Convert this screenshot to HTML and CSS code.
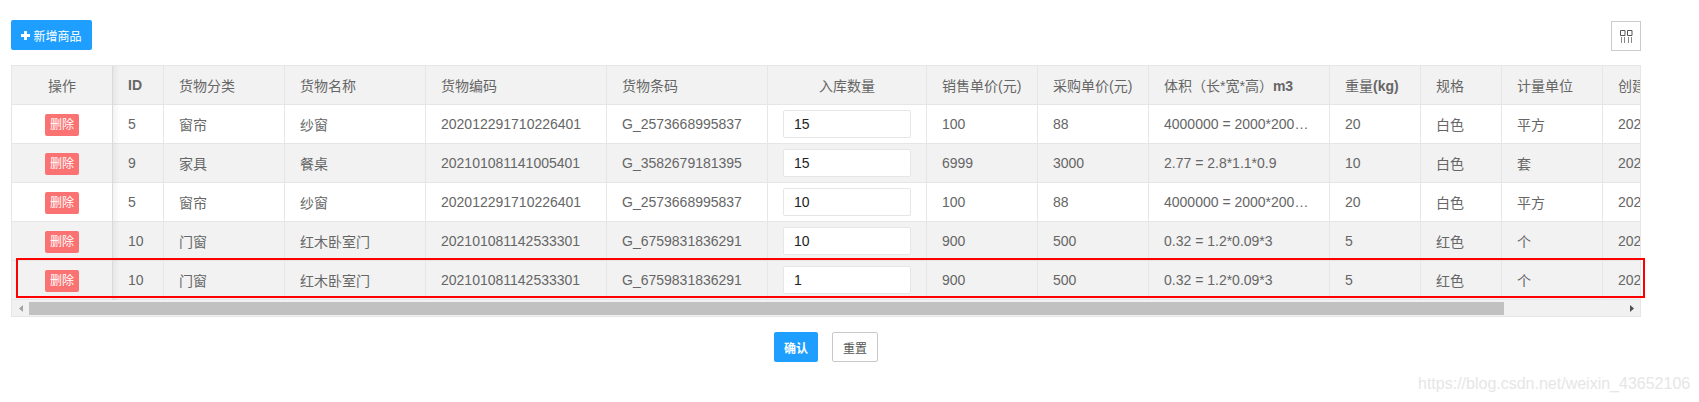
FILE: index.html
```html
<!DOCTYPE html>
<html lang="zh-CN">
<head>
<meta charset="utf-8">
<title>入库</title>
<link rel="stylesheet" href="styles.css">
</head>
<body>
<main class="page">
  <div class="toolbar">
    <button class="btn btn-add" type="button">
      <svg class="plus" viewBox="0 0 9 9" width="9" height="9"><path d="M3.1 0h2.8v3.1H9v2.8H5.9V9H3.1V5.9H0V3.1h3.1z" fill="#fff"/></svg>
      <span>新增商品</span>
    </button>
    <button class="tool-btn" type="button" aria-label="筛选列">
      <svg viewBox="0 0 14 14" width="14" height="14" fill="none" stroke="#555" stroke-width="1">
        <path d="M1.5 1.5h4.5v5H1.5zM8.5 1.5h4.5v5H8.5z"/>
        <path d="M2.5 8v6M5.5 8v6M9.5 8v6M12.5 8v6" stroke="#888"/>
      </svg>
    </button>
  </div>

  <section class="table-box">
    <div class="table-clip">
      <table class="grid">
        <colgroup>
          <col class="c-op"><col class="c-id"><col class="c-cat"><col class="c-name"><col class="c-code"><col class="c-bar"><col class="c-qty"><col class="c-sale"><col class="c-buy"><col class="c-vol"><col class="c-wt"><col class="c-spec"><col class="c-unit"><col class="c-date">
        </colgroup>
        <thead>
          <tr>
            <th class="center fixed">操作</th><th><b>ID</b></th><th>货物分类</th><th>货物名称</th><th>货物编码</th><th>货物条码</th><th class="center">入库数量</th><th>销售单价(元)</th><th>采购单价(元)</th><th>体积（长*宽*高）<b>m3</b></th><th>重量<b>(kg)</b></th><th>规格</th><th>计量单位</th><th>创建时间</th>
          </tr>
        </thead>
        <tbody>
          <tr>
            <td class="center fixed"><button class="del" type="button">删除</button></td><td>5</td><td>窗帘</td><td>纱窗</td><td>202012291710226401</td><td>G_2573668995837</td><td><input class="qty" type="text" value="15"></td><td>100</td><td>88</td><td>4000000 = 2000*2000*1</td><td>20</td><td>白色</td><td>平方</td><td>2020-12-29</td>
          </tr>
          <tr class="alt">
            <td class="center fixed"><button class="del" type="button">删除</button></td><td>9</td><td>家具</td><td>餐桌</td><td>202101081141005401</td><td>G_3582679181395</td><td><input class="qty" type="text" value="15"></td><td>6999</td><td>3000</td><td>2.77 = 2.8*1.1*0.9</td><td>10</td><td>白色</td><td>套</td><td>2021-01-08</td>
          </tr>
          <tr>
            <td class="center fixed"><button class="del" type="button">删除</button></td><td>5</td><td>窗帘</td><td>纱窗</td><td>202012291710226401</td><td>G_2573668995837</td><td><input class="qty" type="text" value="10"></td><td>100</td><td>88</td><td>4000000 = 2000*2000*1</td><td>20</td><td>白色</td><td>平方</td><td>2020-12-29</td>
          </tr>
          <tr class="alt">
            <td class="center fixed"><button class="del" type="button">删除</button></td><td>10</td><td>门窗</td><td>红木卧室门</td><td>202101081142533301</td><td>G_6759831836291</td><td><input class="qty" type="text" value="10"></td><td>900</td><td>500</td><td>0.32 = 1.2*0.09*3</td><td>5</td><td>红色</td><td>个</td><td>2021-01-08</td>
          </tr>
          <tr class="alt">
            <td class="center fixed"><button class="del" type="button">删除</button></td><td>10</td><td>门窗</td><td>红木卧室门</td><td>202101081142533301</td><td>G_6759831836291</td><td><input class="qty" type="text" value="1"></td><td>900</td><td>500</td><td>0.32 = 1.2*0.09*3</td><td>5</td><td>红色</td><td>个</td><td>2021-01-08</td>
          </tr>
        </tbody>
      </table>
    </div>
    <div class="scrollbar">
      <span class="arrow"><svg viewBox="0 0 4 7" width="4" height="7"><path d="M4 0v7L0 3.5z" fill="#a3a3a3"/></svg></span>
      <span class="track"><span class="thumb"></span></span>
      <span class="arrow"><svg viewBox="0 0 4 7" width="4" height="7"><path d="M0 0v7l4-3.5z" fill="#505050"/></svg></span>
    </div>
  </section>

  <div class="actions">
    <button class="btn btn-ok" type="button">确认</button>
    <button class="btn btn-reset" type="button">重置</button>
  </div>
</main>
<div class="mark-box"></div>
<div class="watermark">https://blog.csdn.net/weixin_43652106</div>
</body>
</html>
```
FILE: styles.css
```css
* { box-sizing: border-box; }
html, body { margin: 0; padding: 0; background: #fff; }
body {
  position: relative;
  width: 1699px;
  height: 402px;
  overflow: hidden;
  font-family: "Liberation Sans", "Noto Sans CJK SC", sans-serif;
  font-size: 14px;
  color: #666;
}
.page { width: 1630px; margin-left: 11px; padding-top: 20px; }

.toolbar { display: flex; justify-content: space-between; align-items: flex-start; height: 45px; }
.btn {
  display: inline-flex;
  align-items: center;
  justify-content: center;
  height: 30px;
  border: 0;
  border-radius: 2px;
  padding: 0;
  font: inherit;
  font-size: 12px;
  cursor: pointer;
}
.btn-add { width: 81px; gap: 3px; background: #1e9fff; color: #fff; }
.plus { display: block; }
.tool-btn {
  display: flex;
  align-items: center;
  justify-content: center;
  width: 30px;
  height: 30px;
  margin-top: 1px;
  padding: 0;
  border: 1px solid #ccc;
  background: #fff;
}

.table-box { border: 1px solid #e6e6e6; height: 252px; background: #f1f1f1; }
.table-clip { overflow: hidden; height: 234px; }
.grid { table-layout: fixed; width: 1759px; border-collapse: separate; border-spacing: 0; background: #fff; }
.c-op { width: 101px; } .c-id { width: 51px; } .c-cat { width: 121px; } .c-name { width: 141px; }
.c-code { width: 181px; } .c-bar { width: 161px; } .c-qty { width: 159px; } .c-sale { width: 111px; }
.c-buy { width: 111px; } .c-vol { width: 181px; } .c-wt { width: 91px; } .c-spec { width: 81px; }
.c-unit { width: 101px; } .c-date { width: 173px; }

th, td {
  height: 39px;
  padding: 0 15px;
  border-right: 1px solid #e6e6e6;
  border-bottom: 1px solid #e6e6e6;
  font-weight: 400;
  text-align: left;
  white-space: nowrap;
  overflow: hidden;
  text-overflow: ellipsis;
  color: #666;
}
th { background: #f2f2f2; }
th b { font-weight: 700; }
tr.alt td { background: #f2f2f2; }
.center { text-align: center; }
.fixed { position: relative; overflow: visible; z-index: 1; padding: 0; }
.fixed::after {
  content: "";
  position: absolute;
  top: 0;
  bottom: -1px;
  left: 100%;
  width: 8px;
  background: linear-gradient(to right, rgba(0, 0, 0, .055), rgba(0, 0, 0, 0));
}

.del {
  display: block;
  width: 34px;
  height: 22px;
  margin: 1px auto 0;
  padding: 0;
  border: 0;
  border-radius: 2px;
  background: #fa7272;
  color: #fff;
  font: inherit;
  font-size: 12px;
  line-height: 22px;
}
.qty {
  display: block;
  width: 128px;
  height: 28px;
  padding: 0 0 0 10px;
  border: 1px solid #e6e6e6;
  border-radius: 2px;
  background: #fff;
  color: #222;
  font: inherit;
  font-size: 14px;
  outline: 0;
}

.scrollbar { display: flex; height: 16px; background: #f1f1f1; }
.arrow { display: flex; align-items: center; justify-content: center; flex: 0 0 17px; }
.track { flex: 1; padding-top: 2px; }
.thumb { display: block; width: 1475px; height: 13px; background: #c1c1c1; }

.actions { display: flex; justify-content: center; gap: 14px; margin-top: 15px; }
.btn-ok { width: 44px; background: #1e9fff; color: #fff; font-weight: 700; }
.btn-reset { width: 46px; background: #fff; border: 1px solid #c9c9c9; color: #555; }

.mark-box {
  position: absolute;
  left: 16px;
  top: 258px;
  width: 1629px;
  height: 40px;
  border: 2px solid #f00;
  pointer-events: none;
  z-index: 2;
}
.watermark {
  position: absolute;
  left: 1418px;
  top: 375px;
  font-size: 16px;
  line-height: 18px;
  color: #e6e6e6;
  white-space: nowrap;
}
```
